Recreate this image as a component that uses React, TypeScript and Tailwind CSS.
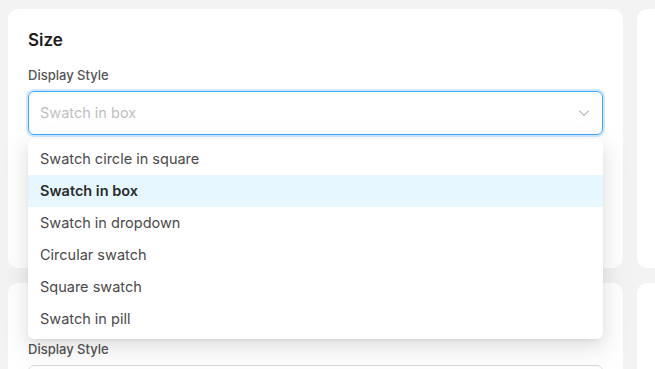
import React from 'react';

const options = [
  'Swatch circle in square',
  'Swatch in box',
  'Swatch in dropdown',
  'Circular swatch',
  'Square swatch',
  'Swatch in pill',
];

function Chevron() {
  return (
    <svg width="12" height="12" viewBox="0 0 12 12" fill="none" className="text-[#bfbfbf]">
      <path d="M1.5 4 L6 8.5 L10.5 4" stroke="currentColor" strokeWidth="1.1" strokeLinecap="round" strokeLinejoin="round" />
    </svg>
  );
}

function Card({ open }: { open?: boolean }) {
  return (
    <div className="bg-white rounded-[10px] h-[259px] px-5 pt-5">
      <h2 className="text-[17px] leading-[22px] font-semibold text-[#1c1c1c]">Size</h2>
      <div className="mt-[14px] text-[13px] leading-[20px] font-medium text-[#555]">Display Style</div>
      <div className="relative mt-[6px]">
        <div
          className={
            open
              ? 'h-[44px] rounded-[6px] border border-[#40a9ff] shadow-[0_0_0_2px_rgba(24,144,255,0.2)] flex items-center justify-between pl-[11px] pr-[12px]'
              : 'h-[44px] rounded-[6px] border border-[#d9d9d9] flex items-center justify-between pl-[11px] pr-[12px]'
          }
        >
          <span className="text-[14.5px] text-[#bfbfbf]">Swatch in box</span>
          <Chevron />
        </div>
        {open && (
          <div className="absolute left-0 right-0 top-[48px] z-10 bg-white rounded-[6px] py-1 shadow-[0_3px_6px_-4px_rgba(0,0,0,0.12),0_6px_16px_0_rgba(0,0,0,0.08),0_9px_28px_8px_rgba(0,0,0,0.05)]">
            {options.map((o) => (
              <div
                key={o}
                className={
                  o === 'Swatch in box'
                    ? 'h-8 flex items-center px-3 text-[14.5px] font-semibold text-[#2b2b2b] bg-[#e6f7ff]'
                    : 'h-8 flex items-center px-3 text-[14.5px] text-[#4a4a4a]'
                }
              >
                {o}
              </div>
            ))}
          </div>
        )}
      </div>
    </div>
  );
}

export default function App() {
  return (
    <div
      className="w-[655px] h-[369px] overflow-hidden bg-[#f3f3f3]"
      style={{ fontFamily: 'Inter, "Noto Sans", sans-serif' }}
    >
      <div className="grid grid-cols-[615px_615px] gap-x-[14px] gap-y-[15px] pt-[9px] pl-2">
        <div className="relative z-10">
          <Card open />
        </div>
        <div className="bg-white rounded-[10px] h-[259px]" />
        <Card />
        <div className="bg-white rounded-[10px] h-[259px]" />
      </div>
    </div>
  );
}
